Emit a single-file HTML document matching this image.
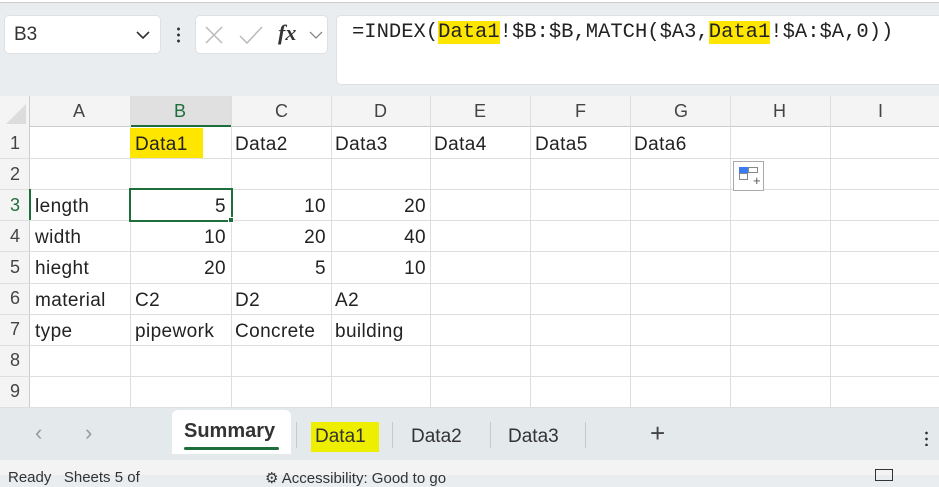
<!DOCTYPE html>
<html><head><style>
*{margin:0;padding:0;box-sizing:border-box}
body{width:939px;height:475px;overflow:hidden;background:#e9edf0;font-family:"Liberation Sans",sans-serif;position:relative;color:#222}
.abs{position:absolute}
.box{background:#fff;border:1px solid #dde1e4;border-radius:5px}
.grid{position:absolute;left:0;top:96px;width:939px;height:312px;background:#fff}
.cell{position:absolute;font-size:19px;line-height:31px;white-space:nowrap;letter-spacing:0.4px}
.hl{background:#ffe600}
</style></head><body>
<div class="abs" style="left:0;top:0;width:939px;height:3px;background:#fff;border-bottom:1px solid #ccc"></div>
<div class="abs box" style="left:4px;top:15px;width:157px;height:39px"></div>
<div class="abs" style="left:14px;top:24px;font-size:19px;color:#333">B3</div>
<svg class="abs" style="left:136px;top:30px" width="14" height="10"><path d="M1 2 L7 8 L13 2" stroke="#333" stroke-width="1.6" fill="none"/></svg>
<div class="abs" style="left:177px;top:26px;width:3px;height:18px;background:radial-gradient(circle,#333 1.3px,transparent 1.6px) 0 0/3px 6px"></div>
<div class="abs box" style="left:195px;top:15px;width:133px;height:39px"></div>
<svg class="abs" style="left:203px;top:24px" width="22" height="22"><path d="M3 3L19 19M19 3L3 19" stroke="#bbb" stroke-width="1.5"/></svg>
<svg class="abs" style="left:238px;top:24px" width="26" height="22"><path d="M2 12L9 19L24 3" stroke="#bbb" stroke-width="1.5" fill="none"/></svg>
<div class="abs" style="left:278px;top:20px;font:italic bold 22px 'Liberation Serif',serif;color:#333">fx</div>
<svg class="abs" style="left:309px;top:31px" width="14" height="9"><path d="M1 1L7 7L13 1" stroke="#888" stroke-width="1.3" fill="none"/></svg>
<div class="abs box" style="left:336px;top:15px;width:610px;height:70px"></div>
<div class="abs" style="left:352px;top:21px;font:20.5px 'Liberation Mono',monospace;color:#222">=INDEX(<span class="hl">Data1</span>!$B:$B,MATCH($A3,<span class="hl">Data1</span>!$A:$A,0))</div>
<div class="grid">
<div class="abs" style="left:0;top:0;width:939px;height:31px;background:#f4f4f4;border-bottom:1px solid #ccc"></div>
<div class="abs" style="left:0;top:0;width:30px;height:312px;background:#f4f4f4;border-right:1px solid #ccc"></div>
<svg class="abs" style="left:6px;top:8px" width="20" height="20"><path d="M20 0L20 20L0 20Z" fill="#dcdcdc"/></svg>
<div class="abs" style="left:130px;top:0;width:101px;height:31px;background:#e0e0e0;border-bottom:2px solid #1e6e3c"></div>
</div>
<svg class="abs" style="left:0;top:96px" width="939" height="312">
<g stroke="#dedede" stroke-width="1">
<path d="M130.5 0V312M231.5 0V312M331.5 0V312M430.5 0V312M530.5 0V312M630.5 0V312M730.5 0V312M830.5 0V312"/>
<path d="M0 62.5H939M0 93.5H939M0 124.5H939M0 155.5H939M0 187.5H939M0 218.5H939M0 249.5H939M0 280.5H939M0 311.5H939"/>
</g>
</svg>
<div class="abs" style="left:29px;top:189px;width:2px;height:31px;background:#1e6e3c"></div>
<div class="abs" style="left:0;top:97px;width:939px;font-size:18px;color:#444">
<span class="abs" style="left:73px;top:4px">A</span><span class="abs" style="left:174px;top:4px;color:#1e6e3c">B</span><span class="abs" style="left:275px;top:4px">C</span><span class="abs" style="left:374px;top:4px">D</span><span class="abs" style="left:474px;top:4px">E</span><span class="abs" style="left:575px;top:4px">F</span><span class="abs" style="left:674px;top:4px">G</span><span class="abs" style="left:773px;top:4px">H</span><span class="abs" style="left:878px;top:4px">I</span>
</div>
<div class="abs" style="left:0;top:128px;width:30px;font-size:18px;color:#444;line-height:31px;text-align:center">1<br>2<br><span style="color:#1e6e3c">3</span><br>4<br>5<br>6<br>7<br>8<br>9</div>
<div class="abs hl" style="left:130px;top:128px;width:73px;height:30px"></div>
<div class="cell" style="left:135px;top:129px">Data1</div>
<div class="cell" style="left:235px;top:129px">Data2</div>
<div class="cell" style="left:335px;top:129px">Data3</div>
<div class="cell" style="left:434px;top:129px">Data4</div>
<div class="cell" style="left:535px;top:129px">Data5</div>
<div class="cell" style="left:634px;top:129px">Data6</div>
<div class="abs" style="left:733px;top:161px;width:31px;height:30px;border:1px solid #aaa;background:#fff"></div>
<div class="abs" style="left:739px;top:167px;width:9px;height:6px;background:#3b7df0"></div>
<div class="abs" style="left:748px;top:167px;width:10px;height:6px;border:1px solid #888"></div>
<div class="abs" style="left:739px;top:173px;width:9px;height:7px;border:1px solid #888"></div>
<div class="abs" style="left:753px;top:176px;font-size:13px;color:#555;line-height:10px">+</div>
<div class="cell" style="left:35px;top:191px">length</div>
<div class="cell" style="left:35px;top:222px">width</div>
<div class="cell" style="left:35px;top:253px">hieght</div>
<div class="cell" style="left:35px;top:285px">material</div>
<div class="cell" style="left:35px;top:316px">type</div>
<div class="cell" style="left:130px;top:191px;width:96px;text-align:right">5</div>
<div class="cell" style="left:130px;top:222px;width:96px;text-align:right">10</div>
<div class="cell" style="left:130px;top:253px;width:96px;text-align:right">20</div>
<div class="cell" style="left:231px;top:191px;width:95px;text-align:right">10</div>
<div class="cell" style="left:231px;top:222px;width:95px;text-align:right">20</div>
<div class="cell" style="left:231px;top:253px;width:95px;text-align:right">5</div>
<div class="cell" style="left:331px;top:191px;width:95px;text-align:right">20</div>
<div class="cell" style="left:331px;top:222px;width:95px;text-align:right">40</div>
<div class="cell" style="left:331px;top:253px;width:95px;text-align:right">10</div>
<div class="cell" style="left:135px;top:285px">C2</div>
<div class="cell" style="left:235px;top:285px">D2</div>
<div class="cell" style="left:335px;top:285px">A2</div>
<div class="cell" style="left:135px;top:316px">pipework</div>
<div class="cell" style="left:235px;top:316px">Concrete</div>
<div class="cell" style="left:335px;top:316px">building</div>
<div class="abs" style="left:129px;top:188px;width:104px;height:34px;border:2px solid #1e6e3c"></div>
<div class="abs" style="left:228px;top:217px;width:6px;height:6px;background:#1e6e3c;border:1px solid #fff"></div>
<div class="abs" style="left:0;top:408px;width:939px;height:52px;background:#e4e9ec"></div>
<div class="abs" style="left:35px;top:420px;font-size:22px;color:#999">&#8249;</div>
<div class="abs" style="left:85px;top:420px;font-size:22px;color:#999">&#8250;</div>
<div class="abs" style="left:172px;top:410px;width:119px;height:44px;background:#fff;border-radius:6px 6px 0 0"></div>
<div class="abs" style="left:184px;top:420px;font-size:20px;font-weight:bold;color:#333">Summary</div>
<div class="abs" style="left:184px;top:447px;width:95px;height:3px;background:#1e6e3c;border-radius:2px"></div>
<div class="abs" style="left:296px;top:422px;width:1px;height:26px;background:#c8c8c8"></div>
<div class="abs" style="left:311px;top:422px;width:68px;height:30px;background:#eeee00"></div>
<div class="abs" style="left:315px;top:426px;font-size:19px;color:#333">Data1</div>
<div class="abs" style="left:392px;top:422px;width:1px;height:26px;background:#c8c8c8"></div>
<div class="abs" style="left:411px;top:426px;font-size:19px;color:#333">Data2</div>
<div class="abs" style="left:490px;top:422px;width:1px;height:26px;background:#c8c8c8"></div>
<div class="abs" style="left:508px;top:426px;font-size:19px;color:#333">Data3</div>
<div class="abs" style="left:585px;top:422px;width:1px;height:26px;background:#c8c8c8"></div>
<div class="abs" style="left:650px;top:418px;font-size:26px;color:#444">+</div>
<div class="abs" style="left:925px;top:430px;width:3px;height:16px;background:radial-gradient(circle,#333 1.2px,transparent 1.5px) 0 0/3px 6px"></div>
<div class="abs" style="left:0;top:460px;width:939px;height:15px;background:#f3f3f3"></div>
<div class="abs" style="left:8px;top:469px;font-size:15px;color:#333">Ready &nbsp; Sheets 5 of</div>
<div class="abs" style="left:265px;top:469px;font-size:15px;color:#333">&#9881; Accessibility: Good to go</div>
<div class="abs" style="left:875px;top:469px;width:18px;height:12px;border:1.5px solid #333"></div>
</body></html>
